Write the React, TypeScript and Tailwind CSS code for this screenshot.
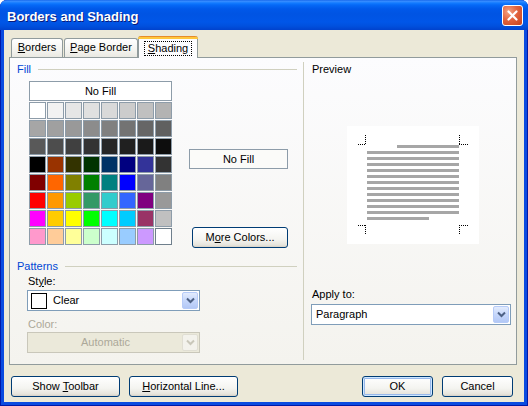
import React from "react";

const COLORS = [
  "#FFFFFF", "#F2F2F2", "#E6E6E6", "#E0E0E0", "#D9D9D9", "#CCCCCC", "#C0C0C0", "#B3B3B3",
  "#A6A6A6", "#A0A0A0", "#999999", "#8C8C8C", "#808080", "#737373", "#666666", "#606060",
  "#595959", "#4D4D4D", "#404040", "#333333", "#262626", "#202020", "#1A1A1A", "#0D0D0D",
  "#000000", "#993300", "#333300", "#003300", "#003366", "#000080", "#333399", "#333333",
  "#800000", "#FF6600", "#808000", "#008000", "#008080", "#0000FF", "#666699", "#808080",
  "#FF0000", "#FF9900", "#99CC00", "#339966", "#33CCCC", "#3366FF", "#800080", "#999999",
  "#FF00FF", "#FFCC00", "#FFFF00", "#00FF00", "#00FFFF", "#00CCFF", "#993366", "#C0C0C0",
  "#FF99CC", "#FFCC99", "#FFFF99", "#CCFFCC", "#CCFFFF", "#99CCFF", "#CC99FF", "#FFFFFF",
];

function Chevron({ color }: { color: string }) {
  return (
    <svg width="9" height="7" viewBox="0 0 9 7">
      <path d="M1 1.5 L4.5 5 L8 1.5" fill="none" stroke={color} strokeWidth="2" />
    </svg>
  );
}

function XpButton({
  children,
  w,
  def,
}: {
  children: React.ReactNode;
  w: string;
  def?: boolean;
}) {
  return (
    <div
      className={
        "h-[21px] flex items-center justify-center rounded-[3px] border border-[#003c74] bg-[linear-gradient(to_bottom,#ffffff_0%,#f4f4f0_60%,#e6e4dc_90%,#d6d0c5_100%)] text-[11px] leading-[13px] text-black " +
        w +
        (def ? " shadow-[inset_0_0_0_1px_#cee7ff,inset_0_0_0_2px_#98b8ea]" : "")
      }
    >
      {children}
    </div>
  );
}

function Tab({ children, w, ml }: { children: React.ReactNode; w: string; ml: string }) {
  return (
    <div
      className={
        "h-[19px] mb-[1px] border-t border-x border-[#919b9c] rounded-t-[3px] bg-[linear-gradient(to_bottom,#ffffff,#f4f4f0_60%,#eae9e2)] flex justify-center pt-[2px] text-[11px] leading-[13px] text-black " +
        w +
        " " +
        ml
      }
    >
      {children}
    </div>
  );
}

export default function App() {
  return (
    <div className="w-[528px] h-[406px] bg-white overflow-hidden font-['Liberation_Sans',Arial,sans-serif]">
      <div className="w-full h-full flex flex-col rounded-t-[7px] overflow-hidden bg-[#0a4be0] shadow-[inset_1px_0_#0019a8,inset_-1px_0_#0019a8,inset_0_-1px_#0019a8]">
        {/* Title bar */}
        <div className="h-[30px] shrink-0 flex items-start pl-[7px] pt-[9px] bg-[linear-gradient(180deg,#0b5ce6_0px,#3b8fff_1px,#2a86ff_2px,#127cff_3px,#0569f7_5px,#0058e9_9px,#0054e3_14px,#0056e8_22px,#0050de_26px,#0042cd_30px)]">
          <span className="text-white font-bold text-[13px] leading-[15px] [text-shadow:1px_1px_#0a1a78]">
            Borders and Shading
          </span>
          <div className="ml-auto mr-[5px] -mt-[4px] w-[21px] h-[21px] rounded-[3px] border border-white bg-[radial-gradient(circle_at_30%_30%,#f3a384_0%,#e2643f_45%,#c6421c_100%)] flex items-center justify-center">
            <svg width="11" height="11" viewBox="0 0 11 11">
              <path d="M1.5 1.5 L9.5 9.5 M9.5 1.5 L1.5 9.5" stroke="#fff" strokeWidth="2.2" strokeLinecap="round" />
            </svg>
          </div>
        </div>

        {/* Client area */}
        <div className="flex-1 mx-[4px] mb-[4px] bg-[#ece9d8] pt-[6px] pl-[5px] flex flex-col">
          {/* Tabs */}
          <div className="h-[22px] flex items-end">
            <Tab w="w-[52px]" ml="ml-[2px]">
              <span>
                <span className="underline underline-offset-[1px]">B</span>orders
              </span>
            </Tab>
            <Tab w="w-[74px]" ml="ml-[1px]">
              <span>
                <span className="underline underline-offset-[1px]">P</span>age Border
              </span>
            </Tab>
            <div className="relative z-10 h-[22px] w-[60px] flex flex-col bg-[#fcfcfe] border-x border-[#919b9c] rounded-t-[3px]">
              <div className="-mx-px h-[3px] rounded-t-[3px] bg-[linear-gradient(to_bottom,#e68b2c_0px,#e68b2c_1px,#ffc73c_1px,#ffc73c_3px)]" />
              <div className="flex justify-center mt-[2px]">
                <div className="h-[15px] px-[3px] border border-dotted border-black text-[11px] leading-[13px] text-black">
                  <span className="underline underline-offset-[1px]">S</span>hading
                </div>
              </div>
            </div>
          </div>

          {/* Panel */}
          <div className="-mt-px w-[508px] h-[308px] border border-[#919b9c] bg-[linear-gradient(to_bottom,#fcfcfe,#f4f3ee)] flex text-[11px] leading-[13px] text-black">
            {/* Left column */}
            <div className="w-[293px] flex flex-col pl-[7px]">
              <div className="mt-[5px] h-[13px] flex items-center mr-[6px]">
                <span className="text-[#0046d5]">Fill</span>
                <div className="flex-1 h-px bg-[#d0d0bf] ml-[7px]" />
              </div>
              <div className="mt-[5px] pl-[12px] flex">
                <div className="flex flex-col">
                  <div className="w-[143px] h-[20px] border border-[#8d9ca9] bg-white flex items-center justify-center">
                    No Fill
                  </div>
                  <div className="mt-[1px] grid grid-cols-[repeat(8,17px)] gap-[1px]">
                    {COLORS.map((c, i) => (
                      <div
                        key={i}
                        className={"w-[17px] h-[17px] border " + (i === 63 ? "border-[#6f7f8c]" : "border-[#8d9ca9]")}
                        style={{ backgroundColor: c }}
                      />
                    ))}
                  </div>
                </div>
                <div className="ml-[17px] flex flex-col">
                  <div className="mt-[68px] w-[99px] h-[20px] border border-[#8d9ca9] bg-[#fbfbf9] flex items-center justify-center">
                    No Fill
                  </div>
                  <div className="mt-[58px] ml-[3px]">
                    <XpButton w="w-[96px]">
                      <span>
                        M<span className="underline underline-offset-[1px]">o</span>re Colors...
                      </span>
                    </XpButton>
                  </div>
                </div>
              </div>

              <div className="mt-[12px] h-[13px] flex items-center mr-[6px]">
                <span className="text-[#0046d5]">Patterns</span>
                <div className="flex-1 h-px bg-[#d0d0bf] ml-[7px]" />
              </div>
              <div className="mt-[2px] pl-[11px] h-[13px]">
                St<span className="underline underline-offset-[1px]">y</span>le:
              </div>
              <div className="mt-[2px] ml-[10px] w-[173px] h-[21px] border border-[#7f9db9] bg-white flex items-center p-px">
                <div className="ml-[2px] w-[16px] h-[16px] border border-black bg-white" />
                <span className="ml-[6px]">Clear</span>
                <div className="ml-auto w-[16px] h-[17px] rounded-[2px] border border-[#b6cbf8] bg-[linear-gradient(to_bottom,#e3ecfd,#c6d7fb_50%,#b3c8f6)] flex items-center justify-center">
                  <Chevron color="#4d6185" />
                </div>
              </div>
              <div className="mt-[7px] pl-[11px] h-[13px] text-[#aca899]">Color:</div>
              <div className="mt-[1px] ml-[10px] w-[173px] h-[21px] border border-[#c9c7ba] bg-[#ebe9da] flex items-center p-px">
                <span className="flex-1 text-center text-[#aca899]">Automatic</span>
                <div className="w-[16px] h-[17px] rounded-[2px] border border-[#e0ded3] bg-[#f3f2ec] flex items-center justify-center">
                  <Chevron color="#c9c7ba" />
                </div>
              </div>
            </div>

            {/* Right column */}
            <div className="flex-1 my-[4px] border-l border-[#d0d0bf] flex flex-col">
              <div className="mt-[1px] ml-[8px] h-[13px]">Preview</div>
              <div className="mt-[50px] ml-[43px] w-[132px] h-[118px] bg-white">
                <svg width="132" height="118" viewBox="0 0 132 118" className="block">
                  <g stroke="#000" strokeWidth="1" strokeDasharray="1 1" shapeRendering="crispEdges" fill="none">
                    <line x1="18.5" y1="9" x2="18.5" y2="19" />
                    <line x1="11" y1="18.5" x2="19" y2="18.5" />
                    <line x1="112.5" y1="9" x2="112.5" y2="19" />
                    <line x1="112" y1="18.5" x2="121" y2="18.5" />
                    <line x1="18.5" y1="99" x2="18.5" y2="109" />
                    <line x1="11" y1="99.5" x2="19" y2="99.5" />
                    <line x1="112.5" y1="99" x2="112.5" y2="109" />
                    <line x1="112" y1="99.5" x2="121" y2="99.5" />
                  </g>
                  <g fill="#a6a6a6">
                    <rect x="50" y="19" width="62" height="3" />
                    {[25, 31, 37, 43, 49, 55, 61, 67, 73, 79, 85].map((y) => (
                      <rect key={y} x="20" y={y} width="92" height="3" />
                    ))}
                    <rect x="20" y="91" width="62" height="3" />
                  </g>
                </svg>
              </div>
              <div className="mt-[44px] ml-[8px] h-[13px]">Apply to:</div>
              <div className="mt-[3px] ml-[7px] w-[200px] h-[21px] border border-[#7f9db9] bg-white flex items-center p-px">
                <span className="ml-[3px]">Paragraph</span>
                <div className="ml-auto w-[16px] h-[17px] rounded-[2px] border border-[#b6cbf8] bg-[linear-gradient(to_bottom,#e3ecfd,#c6d7fb_50%,#b3c8f6)] flex items-center justify-center">
                  <Chevron color="#4d6185" />
                </div>
              </div>
            </div>
          </div>

          {/* Bottom buttons */}
          <div className="mt-[11px] pl-[2px] pr-[11px] flex">
            <XpButton w="w-[109px]">
              <span>
                Show <span className="underline underline-offset-[1px]">T</span>oolbar
              </span>
            </XpButton>
            <div className="ml-[9px]">
              <XpButton w="w-[109px]">
                <span>
                  <span className="underline underline-offset-[1px]">H</span>orizontal Line...
                </span>
              </XpButton>
            </div>
            <div className="ml-auto">
              <XpButton w="w-[71px]" def>
                OK
              </XpButton>
            </div>
            <div className="ml-[9px]">
              <XpButton w="w-[71px]">Cancel</XpButton>
            </div>
          </div>
        </div>
      </div>
    </div>
  );
}
